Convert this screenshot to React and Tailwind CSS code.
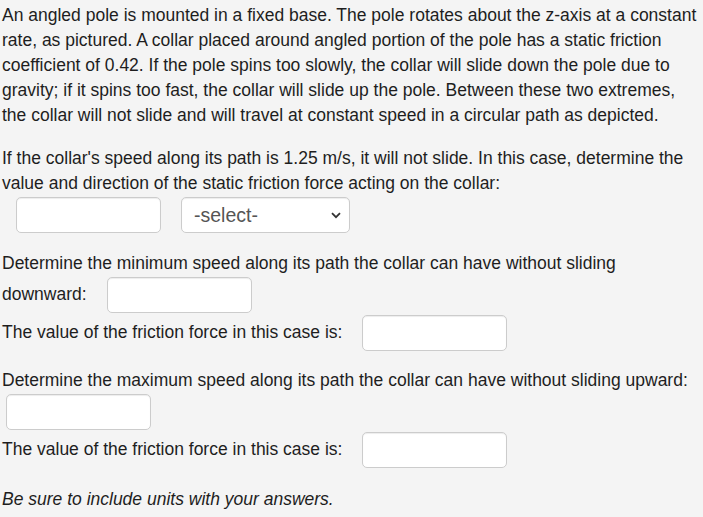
import React from "react";

function TextInput({ className = "" }) {
  return (
    <input
      type="text"
      className={
        "h-9 w-[145px] rounded-[5px] border border-[#cccccc] bg-white align-middle shadow-[inset_0_1px_1px_rgba(0,0,0,0.075)] outline-none " +
        className
      }
    />
  );
}

export default function App() {
  return (
    <div className="min-h-screen bg-[#f4f4f4] pl-0.5 pt-[3px] font-['Liberation_Sans',Arial,sans-serif] text-[17.5px] leading-[25px] text-[#1e1e1e]">
      <p>
        An angled pole is mounted in a fixed base. The pole rotates about the z-axis at a constant
        <br />
        rate, as pictured. A collar placed around angled portion of the pole has a static friction
        <br />
        coefficient of 0.42. If the pole spins too slowly, the collar will slide down the pole due to
        <br />
        gravity; if it spins too fast, the collar will slide up the pole. Between these two extremes,
        <br />
        the collar will not slide and will travel at constant speed in a circular path as depicted.
      </p>

      <p className="mt-[18px]">
        If the collar's speed along its path is 1.25 m/s, it will not slide. In this case, determine the
        <br />
        value and direction of the static friction force acting on the collar:
      </p>

      <div className="flex gap-5 pl-[14px] pt-px">
        <TextInput />
        <div className="relative">
          <select className="h-9 w-[169px] appearance-none rounded-[5px] border border-[#cccccc] bg-white pl-3 font-['Liberation_Sans',Arial,sans-serif] text-[19.5px] text-[#555555] shadow-[inset_0_1px_1px_rgba(0,0,0,0.075)] outline-none">
            <option>-select-</option>
            <option>up the pole</option>
            <option>down the pole</option>
          </select>
          <svg
            className="pointer-events-none absolute right-[9px] top-[15px]"
            width="10"
            height="7"
            viewBox="0 0 10 7"
            fill="none"
          >
            <path d="M1 1.2 L5 5.2 L9 1.2" stroke="#333333" strokeWidth="1.8" />
          </svg>
        </div>
      </div>

      <div className="mt-[18px]">
        <div>Determine the minimum speed along its path the collar can have without sliding</div>
        <div>
          downward:
          <TextInput className="my-px ml-5" />
        </div>
        <div>
          The value of the friction force in this case is:
          <TextInput className="my-px ml-5" />
        </div>
      </div>

      <div className="mt-4">
        <div>Determine the maximum speed along its path the collar can have without sliding upward:</div>
        <div>
          <TextInput className="my-px ml-1" />
        </div>
        <div>
          The value of the friction force in this case is:
          <TextInput className="my-px ml-5" />
        </div>
      </div>

      <p className="mt-[18px] italic">Be sure to include units with your answers.</p>
    </div>
  );
}
